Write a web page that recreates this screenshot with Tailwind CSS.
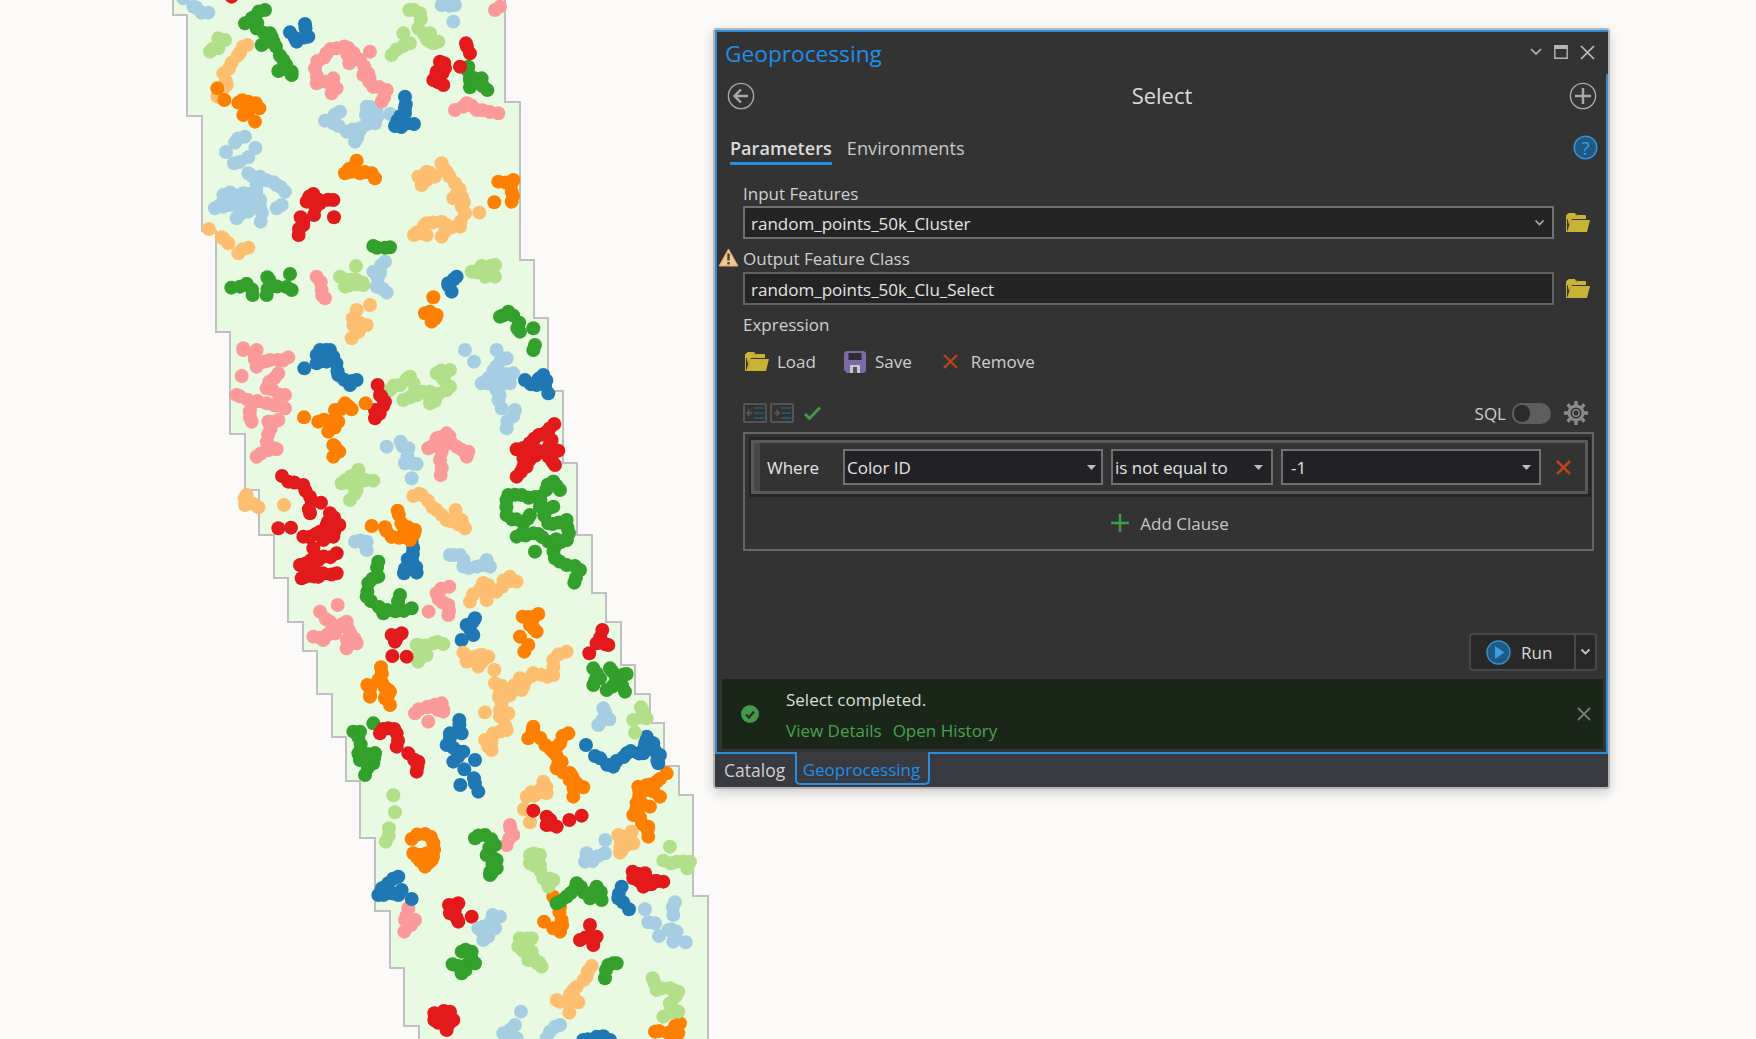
<!DOCTYPE html>
<html lang="en">
<head>
    <meta charset="UTF-8">
    <title>Geoprocessing - Select</title>
    <script src="https://cdn.jsdelivr.net/npm/@tailwindcss/browser@4"></script>
</head>
<body class="relative w-[1756px] h-[1039px] overflow-hidden bg-[#fbfaf9] font-['Open_Sans',sans-serif]">

    <!-- Map canvas -->
    <svg id="map" class="absolute left-0 top-0" width="1756" height="1039" viewBox="0 0 1756 1039" fill="none" stroke-linecap="round" stroke-linejoin="round">
        <path fill="#e9fae2" stroke="#c0c0c0" stroke-width="2" stroke-linecap="butt" stroke-linejoin="miter" d="M173 -2V15H187V116H202V231H216V332H230V434H245V490H259V535H274V578H288V622H303V651H317V694H332V737H346V781H360V838H375V911H390V968H404V1026H419V1041H708V896H693V795H679V766H664V723H650V694H635V665H621V622H606V593H592V535H577V463H563V391H548V318H534V260H520V102H505V-2Z"/>

        <!-- top part -->
        <g transform="translate(160 0) scale(.3333)" stroke-width="28">
            <g stroke="#a6cee3" class="dots">
                <path d="M70 -5h0M100 20L125 38L145 38M860 0L885 15L845 15M880 65h0M495 362L540 335M520 370L560 395L600 390L585 425M600 385L645 370L650 335L620 320L618 345M690 342h0M255 410L225 428M198 456h0M286 444h0M265 472L222 490M265 520L300 530L350 555L375 575M290 555L300 620L302 665M300 600L250 580L190 585M165 625L240 610L300 600M230 655L265 635M350 625L365 615M240 590L190 620M675 785L660 815L640 815M650 860L680 878M660 820L655 855"/>
            </g>
            <g stroke="#b2df8a" class="dots">
                <path d="M748 30L780 40L775 85L810 125L835 125M730 100h0M695 165L750 130M810 100L820 130M175 115L195 120M150 155L175 145M1005 795L935 815L1005 830M540 830L590 840L610 855L555 860M588 798h0"/>
            </g>
            <g stroke="#33a02c" class="dots">
                <path d="M315 30L285 50L255 70M285 50L290 85L330 100L340 125L305 135M340 125L370 180L395 215L395 225M355 213L380 205M925 200L930 235L930 262M930 240L965 235L982 270M640 738L690 742M214 863h0M260 852L278 885M322 832L335 855L320 885M335 855L395 870M390 822h0M240 860L260 852M1020 950L1045 935L1078 968L1080 995M1120 985h0M1125 1035h0"/>
            </g>
            <g stroke="#1f78b4" class="dots">
                <path d="M435 72L445 110L410 125L390 97M735 290L735 340L705 378L762 372M890 830L865 850L875 875M480 1050L510 1050"/>
            </g>
            <g stroke="#fb9a99" class="dots">
                <path d="M1020 20L1005 30M630 155h0M500 160L530 145L565 145L600 180L625 220L640 260L680 270L665 305M565 145L568 190M500 160L465 205L470 250L520 235L530 265L515 280M610 225L640 260M885 330L920 310L950 330L1015 340M470 830L485 870L495 895M250 1045h0M290 1050h0"/>
            </g>
            <g stroke="#e31a1c" class="dots">
                <path d="M215 -10h0M918 130L930 160M900 200h0M840 185L855 205L820 240L850 255M830 215L835 245M460 582L440 605L520 600M480 610L462 645M522 652h0M422 652L430 675L416 705"/>
            </g>
            <g stroke="#fdbf6f" class="dots">
                <path d="M262 135L240 158L215 188L190 220L200 255L172 290M147 687h0M185 712L205 730M235 760L265 743M845 490L860 515L885 550L905 590L880 595M905 590L915 640L900 680L860 675L845 710M775 530L800 515L825 530L785 555M845 665L800 670L762 705L800 705M958 638h0M590 930L580 975L620 975L575 1015M630 915h0"/>
            </g>
            <g stroke="#ff7f00" class="dots">
                <path d="M172 265h0M193 300h0M235 308L265 305L298 325M250 345L270 325M285 365h0M590 482L555 520L600 520L635 520L645 535M1015 545L1060 540L1055 575L1055 605M1003 607h0M820 892h0M810 935L815 965L830 945L795 940"/>
            </g>
        </g>

        <!-- middle part -->
        <g transform="translate(220 350) scale(.3333)" stroke-width="28">
            <g stroke="#fb9a99" class="dots">
                <path d="M70 0h0M105 15L110 50L150 30L205 22M65 78h0M175 70L140 115L195 135M50 135L95 160L140 160L195 175M95 160L95 215M150 215L175 210M145 215L145 300L110 320M145 300L170 298M650 265L680 250L710 290L740 320L745 305M625 295L660 290L660 330L662 375M300 785L330 815L345 850L380 815L390 850L380 895M280 860L310 870L345 850M353 765h0M390 850L410 880M688 710L650 730L685 765L685 795M626 785h0"/>
            </g>
            <g stroke="#1f78b4" class="dots">
                <path d="M290 15L340 20L355 75L390 105L410 90M253 55h0M320 35L290 40M915 90L950 105L970 75L985 130M575 575L578 612L552 670M578 612L590 668M765 805L740 825L760 855M725 870h0"/>
            </g>
            <g stroke="#b2df8a" class="dots">
                <path d="M510 120L540 105L570 80L590 135L550 150M590 135L630 125L630 160L690 110L650 70L690 60M415 360L365 400L460 392M415 360L410 420L390 450M595 885L640 880L670 882M590 885L620 915L595 935"/>
            </g>
            <g stroke="#a6cee3" class="dots">
                <path d="M735 0h0M762 35h0M830 0h0M860 25L830 50L785 100L880 70M830 50L830 120L845 175M885 180L860 235M830 100L870 100M500 290h0M542 275L565 295L555 340L590 342M575 385h0M405 575L440 575L440 600M690 615L720 615L730 650L770 650L810 650L800 630"/>
            </g>
            <g stroke="#e31a1c" class="dots">
                <path d="M473 105h0M480 135L495 155L465 205L465 180M1003 222L975 250L930 280L890 298M930 280L910 350L890 380M975 250L995 270L985 320L1005 345M1015 302h0M950 300L920 350M186 378h0M205 395L250 405L270 440L270 490M303 458h0M330 490L358 525L340 560L310 570M340 510L300 545L250 560M175 535h0M213 533h0M280 595h0M240 645L295 630L350 610M245 685L295 680L350 670M280 640L295 680M515 855L545 850L525 875M517 918h0M560 920h0M1147 840L1130 880L1165 885M1108 910h0"/>
            </g>
            <g stroke="#33a02c" class="dots">
                <path d="M940 0h0M1000 395L960 440L905 435L865 435L860 495L910 520L930 495M960 440L985 520L1040 510L1040 570L1005 590L1005 625L1040 645L1080 660L1063 698M890 560L940 550L985 575L1040 570M945 605h0M1000 470L960 470M1020 420L1000 395M475 635L475 680L445 700L440 740L490 790L540 780L540 735M540 780L575 775"/>
            </g>
            <g stroke="#fdbf6f" class="dots">
                <path d="M80 435L75 465M115 472L100 462M192 465h0M580 438L605 435L650 480L680 510L735 535L725 510M707 480h0M750 755L790 700L830 725L870 680L890 695M790 700L800 750M730 908L740 935L780 915L805 920L775 950M823 960h0M825 1000L870 1035L900 985L910 1010L940 970L1000 975L1000 930L1040 905"/>
            </g>
            <g stroke="#ff7f00" class="dots">
                <path d="M252 202h0M295 215L355 215L325 245M345 180L375 160L395 178M437 160h0M340 285L358 305L340 320M533 482L550 530L585 540L570 570L515 560M455 528h0M495 532L515 560M908 800L955 792L930 825L950 845M900 860h0M925 885L913 905M483 952L475 990L510 1025L495 1045M442 1005L450 1035"/>
            </g>
        </g>

        <!-- right notch -->
        <g transform="translate(590 600) scale(.3333)" stroke-width="28">
            <g stroke="#33a02c" class="dots">
                <path d="M60 205L80 235L110 222M80 235L105 275M50 270L80 235M10 205L30 235L10 255"/>
            </g>
        </g>

        <!-- bottom part -->
        <g transform="translate(340 690) scale(.3333)" stroke-width="28">
            <g stroke="#ff7f00" class="dots">
                <path d="M90 20h0M145 0L150 45M580 110L565 145M580 125L630 175L665 215L650 235L690 250L700 320M685 130L660 160L635 180M690 250L730 292M980 250L950 275L895 290L905 340L880 375L925 410L925 440M930 350L890 340M960 320L920 300M215 447L255 432L280 460L275 510L255 530L220 490L260 490M640 620h0M660 650L665 690L660 725L640 715M612 695h0M1020 1000L1000 1030L945 1025M1000 1030L1015 1030"/>
            </g>
            <g stroke="#fdbf6f" class="dots">
                <path d="M545 0h0M480 10L480 60L500 120L460 130L455 180L435 150M505 70L480 80M435 67h0M610 275L620 310L560 320L600 300M552 358h0M570 397h0M875 425L860 465L840 488L835 435L880 460M755 828L740 860L700 900L685 935L650 930M715 937L700 920M688 968h0"/>
            </g>
            <g stroke="#fb9a99" class="dots">
                <path d="M225 70L270 50L310 65L305 40L265 50M265 95h0M510 405L520 435L500 465M205 655L195 690L225 690L193 725"/>
            </g>
            <g stroke="#1f78b4" class="dots">
                <path d="M358 90L365 130M330 130L320 165L370 185L340 215M405 210h0M373 238h0M402 265L415 305M361 285h0M738 165h0M765 198L820 230L860 190L910 190L940 160L960 195L955 220M920 140L900 190M175 560L145 580L115 615L175 615L185 600M215 627h0M845 590L835 625L867 658M730 1050L770 1040L810 1050"/>
            </g>
            <g stroke="#33a02c" class="dots">
                <path d="M100 100h0M40 125L60 125L55 190L105 190L100 220L75 255M105 190L60 210M405 445L435 435L465 465L440 495L470 510L450 555L470 535M680 620L710 580L750 625L770 590L785 630M650 640L680 620M820 820L805 825L795 865M830 820h0M338 823L380 825L405 820M365 785L395 785L380 825L365 850"/>
            </g>
            <g stroke="#e31a1c" class="dots">
                <path d="M120 130L145 115L170 130L170 170M205 190L235 215L230 245M580 362h0M620 380L650 410L620 405M688 390h0M725 377h0M878 545L915 550L910 590L970 575L880 565M327 645L355 640L330 670L355 695M395 680h0M750 705h0M720 750L770 740L760 765M283 970L330 965L340 990L320 1020M283 990L320 1000"/>
            </g>
            <g stroke="#a6cee3" class="dots">
                <path d="M790 55L808 88M790 85L775 105M740 490L735 515L795 490M796 450h0M915 658h0M925 697L945 700M1005 637L1000 675M957 738h0M985 720L1010 725L1000 755M1037 757h0M458 675L480 680L430 710L430 750L465 715L415 715M543 965h0M525 1005L490 1030L530 1045M660 1005L630 1025L620 1045"/>
            </g>
            <g stroke="#b2df8a" class="dots">
                <path d="M903 52L920 85L880 90M885 128h0M160 316h0M165 367h0M147 415L137 455M990 470h0M970 512L1010 515L1050 515L1042 535M570 495L600 495L570 520L600 525L610 565L640 570L625 590M540 745L575 745L535 770L575 785L605 830L565 810M938 865L950 900L990 895L1015 905L990 940L1015 965L970 980"/>
            </g>
        </g>
    </svg>

    <!-- Geoprocessing pane -->
    <div class="absolute left-[713px] top-[28px] w-[897px] h-[761px] flex flex-col overflow-hidden rounded-[4px] border-2 border-[#b5b5b5] bg-[#333333] text-[#d6d6d6] text-[17px] leading-none shadow-[0_4px_12px_rgba(0,0,0,0.18)]">
        <div class="flex flex-col flex-1 min-h-0 border-l-2 border-t-2 border-[#2a8ddb] relative">
            <!-- right edge is blue only below the title -->
            <div class="absolute right-0 top-[42px] bottom-0 w-[2px] bg-[#2a8ddb]"></div>

            <!-- title -->
            <div class="flex items-center h-[43px] pl-[8px] pr-[13px] shrink-0">
                <span class="pt-[2px] text-[22.7px] text-[#1e90ec]">Geoprocessing</span>
                <div class="ml-auto -mt-[3px] flex items-center">
                    <svg width="14" height="10" viewBox="0 0 14 10" fill="none" stroke="#b5b5b5" stroke-width="1.7"><path d="M2 2l5 5 5-5"/></svg>
                    <svg class="ml-[11px]" width="14" height="14" viewBox="0 0 14 14" fill="none" stroke="#b5b5b5"><path d="M.8.8h12.400v12.400H.8z" stroke-width="1.400"/><path d="M.8 2.500h12.400" stroke-width="3"/></svg>
                    <svg class="ml-[12px]" width="15" height="15" viewBox="0 0 15 15" fill="none" stroke="#c4c4c4" stroke-width="1.600"><path d="M1 1l13 13M14 1L1 14"/></svg>
                </div>
            </div>

            <!-- nav -->
            <div class="flex items-center justify-between h-[42px] pl-[10px] pr-[11px] shrink-0">
                <svg width="28" height="28" viewBox="0 0 28 28" fill="none" stroke="#a8a8a8"><circle cx="14" cy="14" r="12.600" stroke-width="1.400"/><path d="M14 7.500L7.500 14 14 20.500M8 14h13" stroke-width="2.400"/></svg>
                <span class="pb-[2px] text-[22px] text-[#dcdcdc]">Select</span>
                <svg width="28" height="28" viewBox="0 0 28 28" fill="none" stroke="#a8a8a8"><circle cx="14" cy="14" r="12.600" stroke-width="1.400"/><path d="M14 6v16M6 14h16" stroke-width="2.400"/></svg>
            </div>

            <!-- tabs -->
            <div class="flex items-start h-[68px] pl-[13px] pr-[10px] pt-[22px] shrink-0">
                <span class="pb-[5px] border-b-[3px] border-[#1e90ec] text-[18.100px] font-semibold text-[#dcdcdc]">Parameters</span>
                <span class="ml-[15px] text-[18.200px] text-[#c8c8c8]">Environments</span>
                <svg class="ml-auto -mt-[4px]" width="25" height="25" viewBox="0 0 25 25" fill="#1f5a87" stroke="#3792d2"><circle cx="12.500" cy="12.500" r="11.300" stroke-width="1.500"/><text x="12.500" y="19.500" text-anchor="middle" font-size="19" fill="#3c9ddf" stroke="none" font-family="Open Sans">?</text></svg>
            </div>

            <!-- parameters -->
            <div class="flex flex-col pl-[26px] pr-[14px] shrink-0">
                <label class="h-[20px] mb-[1px] pb-[3px] flex items-center text-[#cfcfcf]">Input Features</label>
                <div class="flex items-center gap-[12px] mr-[4px]">
                    <div class="flex-1 flex items-center justify-between h-[33px] pl-[6px] pr-[7px] pt-[1px] border-2 border-[#707070] bg-[#242424] text-[#e4e4e4]">
                        <span class="pt-[1px]">random_points_50k_Cluster</span>
                        <svg width="11" height="8" viewBox="0 0 11 8" fill="none" stroke="#b0b0b0" stroke-width="1.600"><path d="M1.500 1.500l4 4 4-4"/></svg>
                    </div>
                    <svg width="24" height="20" viewBox="0 0 24 20"><path fill="#c9b334" d="M1 19L5 7h19l-3 12z"/><path fill="#c9b334" d="M0 19V3l2-2h7l2 2h9v3H6L3 12 1.600 6H.8"/><path fill="none" stroke="#c9b334" d="M.5 19V2.500l2-2h6.500l2 2h8.500v3"/></svg>
                </div>

                <div class="relative h-[33px] flex items-end pb-[5px] text-[#cfcfcf]">
                    <svg class="absolute -left-[25px] top-[9px]" width="21" height="19" viewBox="0 0 21 19"><path fill="#f2c892" stroke="#e0a75e" d="M10.500 1L20 18H1z"/><path d="M10.500 5.500v7M10.500 14v2.400" stroke="#44403a" stroke-width="2.400"/></svg>
                    Output Feature Class
                </div>
                <div class="flex items-center gap-[12px] mr-[4px]">
                    <div class="flex-1 flex items-center h-[33px] pl-[6px] pt-[2px] border-2 border-[#626262] bg-[#242424] text-[#e4e4e4]">random_points_50k_Clu_Select</div>
                    <svg width="24" height="20" viewBox="0 0 24 20"><path fill="#c9b334" d="M1 19L5 7h19l-3 12z"/><path fill="#c9b334" d="M0 19V3l2-2h7l2 2h9v3H6L3 12 1.600 6H.8"/><path fill="none" stroke="#c9b334" d="M.5 19V2.500l2-2h6.500l2 2h8.500v3"/></svg>
                </div>

                <label class="h-[40px] pb-[1px] flex items-center text-[#cfcfcf]">Expression</label>

                <!-- load save remove -->
                <div class="flex items-center h-[33px] pl-[2px] text-[#cfcfcf]">
                    <svg width="24" height="20" viewBox="0 0 24 20"><path fill="#c9b334" d="M1 19L5 7h19l-3 12z"/><path fill="#c9b334" d="M0 19V3l2-2h7l2 2h9v3H6L3 12 1.600 6H.8"/><path fill="none" stroke="#c9b334" d="M.5 19V2.500l2-2h6.500l2 2h8.500v3"/></svg>
                    <span class="ml-[8px]">Load</span>
                    <svg class="ml-[28px]" width="22" height="22" viewBox="0 0 22 22"><path fill="#7d68a8" d="M2 0h18l2 2v18l-2 2H3l-3-3V2z"/><path fill="#2c2c32" d="M4.500 2h13v7h-13z"/><path fill="#c9c9c9" d="M6 14h10v8H6z"/><path fill="#55505e" d="M9 16h4v6H9z"/></svg>
                    <span class="ml-[9px]">Save</span>
                    <svg class="ml-[31px]" width="15" height="15" viewBox="0 0 15 15" fill="none" stroke="#b9431f" stroke-width="2.400"><path d="M1 1l13 13M14 1L1 14"/></svg>
                    <span class="ml-[13px]">Remove</span>
                </div>

                <!-- clause toolbar -->
                <div class="flex items-center h-[32px] mt-[19px] mb-[3px]">
                    <span class="flex items-center justify-center w-[24px] h-[20px] rounded-[2px] border-2 border-[#555] mr-[3px]">
                        <svg width="18" height="14" viewBox="0 0 18 14" fill="none"><path d="M8 2h10M8 7h10M8 12h10" stroke="#28597a" stroke-width="1.600"/><path d="M6 7H1M3.500 4L1 7l2.500 3" stroke="#5c5c5c" stroke-width="1.400"/></svg>
                    </span>
                    <span class="flex items-center justify-center w-[24px] h-[20px] rounded-[2px] border-2 border-[#555]">
                        <svg width="18" height="14" viewBox="0 0 18 14" fill="none"><path d="M8 2h10M8 7h10M8 12h10" stroke="#28597a" stroke-width="1.600"/><path d="M1 7h5M3.500 4L6 7l-2.500 3" stroke="#5c5c5c" stroke-width="1.400"/></svg>
                    </span>
                    <svg class="ml-[10px]" width="17" height="14" viewBox="0 0 17 14" fill="none" stroke="#429a48" stroke-width="2.800"><path d="M1 8l4.500 4.500L16 1.500"/></svg>
                    <span class="ml-auto text-[#cfcfcf]">SQL</span>
                    <span class="ml-[6px] flex items-center w-[39px] h-[21px] rounded-full bg-[#5e5e5e]">
                        <span class="w-[20px] h-[21px] rounded-full border-2 border-[#5e5e5e] bg-[#2b2b2b]"></span>
                    </span>
                    <svg class="ml-[13px] mr-[6px]" width="24" height="24" viewBox="0 0 24 24"><circle cx="12" cy="12" r="7" fill="none" stroke="#8a8a8a" stroke-width="3"/><circle cx="12" cy="12" r="3.200" fill="none" stroke="#8a8a8a" stroke-width="1.400"/><path stroke="#8a8a8a" stroke-width="3.400" d="M12 0v4M12 20v4M0 12h4M20 12h4M3.500 3.500l2.800 2.800M17.700 17.700l2.800 2.800M20.500 3.500l-2.800 2.800M6.300 17.700l-2.800 2.800"/></svg>
                </div>

                <!-- clause box -->
                <div class="h-[119px] pt-[3px] pl-[4px] pr-[1px] border-2 border-[#666666]">
                    <div class="h-[60px] p-[3px] pl-[2px] bg-[#262626]">
                        <div class="flex items-center h-full border-[3px] border-[#5a5a5a] bg-[#333333]">
                            <div class="w-[6px] h-full bg-[#474747]"></div>
                            <span class="ml-[7px] w-[76px] text-[#e4e4e4]">Where</span>
                            <div class="flex items-center justify-between w-[260px] h-[36px] pl-[2px] pr-[5px] border-2 border-[#707070] bg-[#222226] text-[#e4e4e4]">
                                <span>Color ID</span>
                                <svg width="9" height="5" viewBox="0 0 9 5"><path d="M0 0h9L4.500 5z" fill="#c0c0c0"/></svg>
                            </div>
                            <div class="flex items-center justify-between w-[162px] h-[36px] ml-[8px] pl-[2px] pr-[8px] border-2 border-[#707070] bg-[#222226] text-[#e4e4e4]">
                                <span>is not equal to</span>
                                <svg width="9" height="5" viewBox="0 0 9 5"><path d="M0 0h9L4.500 5z" fill="#c0c0c0"/></svg>
                            </div>
                            <div class="flex items-center justify-between w-[260px] h-[36px] ml-[8px] pl-[8px] pr-[8px] border-2 border-[#707070] bg-[#222226] text-[#e4e4e4]">
                                <span>-1</span>
                                <svg width="9" height="5" viewBox="0 0 9 5"><path d="M0 0h9L4.500 5z" fill="#c0c0c0"/></svg>
                            </div>
                            <svg class="ml-[15px]" width="15" height="15" viewBox="0 0 15 15" fill="none" stroke="#b9431f" stroke-width="2.600"><path d="M1 1l13 13M14 1L1 14"/></svg>
                        </div>
                    </div>
                    <div class="flex items-center justify-center h-[52px] gap-[11px] text-[#c8c8c8]">
                        <svg width="18" height="18" viewBox="0 0 18 18" fill="none" stroke="#429a48" stroke-width="2.600"><path d="M9 0v18M0 9h18"/></svg>
                        <span>Add Clause</span>
                    </div>
                </div>
            </div>

            <!-- run -->
            <div class="flex justify-end mt-auto h-[38px] pr-[11px] shrink-0">
                <div class="flex h-full rounded-[4px] border-2 border-[#47484e] bg-[#282828] text-[#d8d8d8]">
                    <div class="flex items-center w-[103px] pl-[15px] gap-[10px]">
                        <svg width="25" height="25" viewBox="0 0 25 25"><circle cx="12.500" cy="12.500" r="11.500" fill="#1f5a87" stroke="#3792d2" stroke-width="1.400"/><path d="M9 6l9.500 6.500L9 19z" fill="#3c9ddf"/></svg>
                        <span>Run</span>
                    </div>
                    <div class="flex items-center justify-center w-[21px] border-l-2 border-[#47484e]">
                        <svg width="11" height="8" viewBox="0 0 11 8" fill="none" stroke="#c4c4c4" stroke-width="1.800"><path d="M1.500 1.500l4 4 4-4"/></svg>
                    </div>
                </div>
            </div>

            <!-- message -->
            <div class="flex items-center h-[70px] mt-[8px] ml-[5px] mr-[5px] bg-[#192618] shrink-0">
                <svg class="ml-[19px]" width="18" height="18" viewBox="0 0 18 18"><circle cx="9" cy="9" r="9" fill="#43984a"/><path d="M5 9.500l3 3 5-6" fill="none" stroke="#2a2f2a" stroke-width="2.200"/></svg>
                <div class="ml-[27px] pt-[2px] flex flex-col gap-[14px]">
                    <span class="text-[#dcdcdc]">Select completed.</span>
                    <div class="flex gap-[11px] text-[#49a24f]"><span>View Details</span><span>Open History</span></div>
                </div>
                <svg class="ml-auto mr-[12px]" width="14" height="14" viewBox="0 0 14 14" fill="none" stroke="#7b7b7b" stroke-width="1.800"><path d="M1 1l12 12M13 1L1 13"/></svg>
            </div>
            <div class="h-[3px] shrink-0"></div>
        </div>

        <!-- dock tabs -->
        <div class="flex h-[35px] shrink-0 bg-[#383a40] border-t-2 border-[#2a8ddb]">
            <span class="flex items-center w-[80px] pl-[9px] pt-[1px] text-[17.500px] text-[#cfcfcf]">Catalog</span>
            <span class="flex items-center justify-center w-[135px] h-[33px] -mt-[2px] pt-[3px] pr-[2px] rounded-b-[5px] border-2 border-t-0 border-[#2a8ddb] bg-[#383a40] text-[#1e90ec]">Geoprocessing</span>
        </div>
    </div>

    <script>
        // turn each cluster's outline into the point symbols that make it up
        document.querySelectorAll('#map .dots').forEach(function (group) {
            var colour = group.getAttribute('stroke');
            var path = group.querySelector('path');
            var seed = 7;
            function jitter() {
                seed = (seed * 31 + 11) % 101;
                return (seed - 50) / 50 * 7;
            }
            function dot(x, y) {
                var c = document.createElementNS('http://www.w3.org/2000/svg', 'circle');
                c.setAttribute('cx', x);
                c.setAttribute('cy', y);
                c.setAttribute('r', 21);
                c.setAttribute('fill', colour);
                c.setAttribute('stroke', 'none');
                group.appendChild(c);
            }
            path.getAttribute('d').match(/[MLh][^MLh]*/g).forEach(function (token, i, all) {
                if (token[0] === 'h') return;
                var xy = token.slice(1).trim().split(/\s+/).map(Number);
                dot(xy[0], xy[1]);
                if (token[0] === 'L') {
                    var prev = all[i - 1].slice(1).trim().split(/\s+/).map(Number);
                    var dist = Math.hypot(xy[0] - prev[0], xy[1] - prev[1]);
                    var steps = Math.floor(dist / 24);
                    for (var s = 1; s <= steps; s++) {
                        var t = s / (steps + 1);
                        dot(prev[0] + (xy[0] - prev[0]) * t + jitter(), prev[1] + (xy[1] - prev[1]) * t + jitter());
                    }
                }
            });
        });
    </script>
</body>
</html>
